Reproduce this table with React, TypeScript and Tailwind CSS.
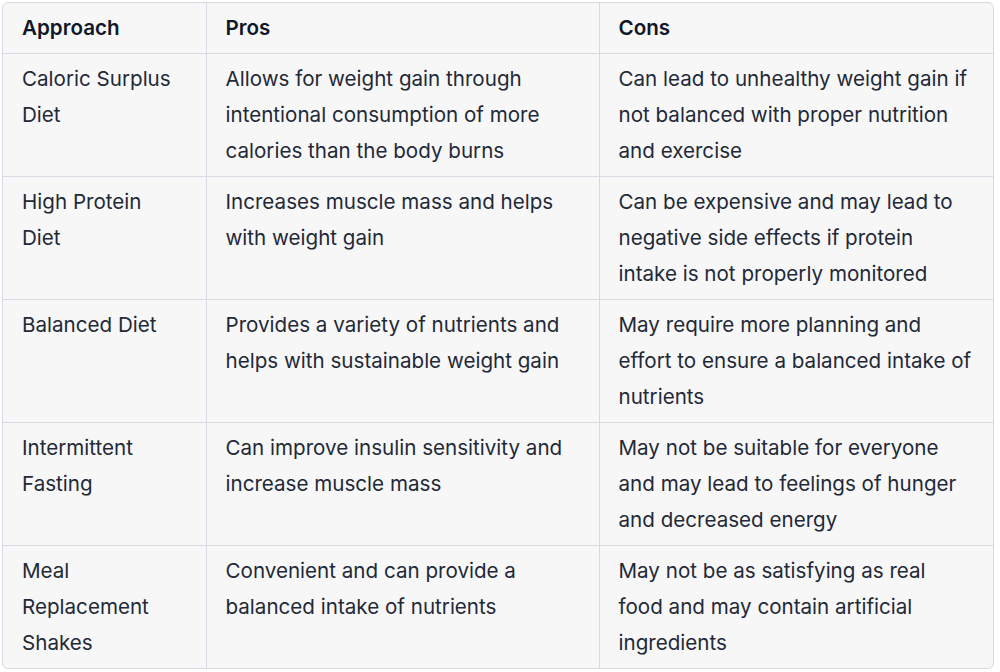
import React from 'react';

interface Row {
  approach: string[];
  pros: string[];
  cons: string[];
}

// line breaks are fixed so the wrapping matches the original table
const rows: Row[] = [
  {
    approach: ['Caloric Surplus', 'Diet'],
    pros: ['Allows for weight gain through', 'intentional consumption of more', 'calories than the body burns'],
    cons: ['Can lead to unhealthy weight gain if', 'not balanced with proper nutrition', 'and exercise'],
  },
  {
    approach: ['High Protein', 'Diet'],
    pros: ['Increases muscle mass and helps', 'with weight gain'],
    cons: ['Can be expensive and may lead to', 'negative side effects if protein', 'intake is not properly monitored'],
  },
  {
    approach: ['Balanced Diet'],
    pros: ['Provides a variety of nutrients and', 'helps with sustainable weight gain'],
    cons: ['May require more planning and', 'effort to ensure a balanced intake of', 'nutrients'],
  },
  {
    approach: ['Intermittent', 'Fasting'],
    pros: ['Can improve insulin sensitivity and', 'increase muscle mass'],
    cons: ['May not be suitable for everyone', 'and may lead to feelings of hunger', 'and decreased energy'],
  },
  {
    approach: ['Meal', 'Replacement', 'Shakes'],
    pros: ['Convenient and can provide a', 'balanced intake of nutrients'],
    cons: ['May not be as satisfying as real', 'food and may contain artificial', 'ingredients'],
  },
];

const Lines: React.FC<{ lines: string[] }> = ({ lines }) => (
  <>
    {lines.map((line, i) => (
      <div key={i} className="whitespace-nowrap">{line}</div>
    ))}
  </>
);

const App: React.FC = () => {
  return (
    <div className="w-[1000px] h-[672px] bg-white pt-[2px] pl-[2px] font-['Inter',sans-serif]">
      <div className="w-[992px] rounded-md border border-[#d9d9e3] bg-[#f7f7f8] overflow-hidden">
        <table className="w-full border-collapse table-fixed text-[20.6px] leading-[36px] text-[#1f2937]">
          <colgroup>
            <col className="w-[203px]" />
            <col className="w-[393px]" />
            <col />
          </colgroup>
          <thead>
            <tr className="border-b border-[#d9d9e3]">
              <th className="text-left font-semibold text-[#111827] px-[19px] py-[7px] border-r border-[#d9d9e3]">Approach</th>
              <th className="text-left font-semibold text-[#111827] px-[19px] py-[7px] border-r border-[#d9d9e3]">Pros</th>
              <th className="text-left font-semibold text-[#111827] px-[19px] py-[7px]">Cons</th>
            </tr>
          </thead>
          <tbody>
            {rows.map((row, i) => (
              <tr key={i} className="border-b border-[#d9d9e3] last:border-b-0 align-top">
                <td className="px-[19px] py-[7px] border-r border-[#d9d9e3]">
                  <Lines lines={row.approach} />
                </td>
                <td className="px-[19px] py-[7px] border-r border-[#d9d9e3]">
                  <Lines lines={row.pros} />
                </td>
                <td className="px-[19px] py-[7px]">
                  <Lines lines={row.cons} />
                </td>
              </tr>
            ))}
          </tbody>
        </table>
      </div>
    </div>
  );
};

export default App;
